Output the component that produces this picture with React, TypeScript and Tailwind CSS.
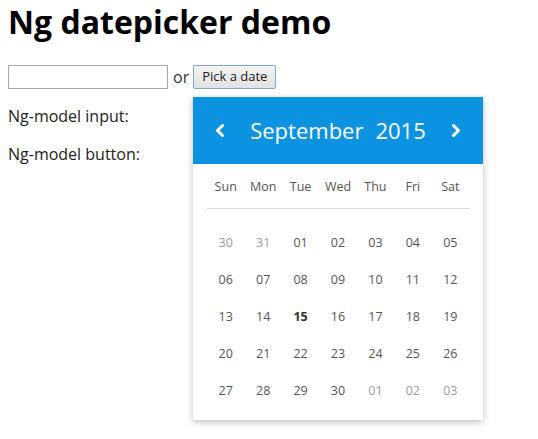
const font = { fontFamily: '"Open Sans", "Liberation Sans", sans-serif' };

const weeks: { d: string; muted?: boolean; bold?: boolean }[][] = [
  [{ d: "30", muted: true }, { d: "31", muted: true }, { d: "01" }, { d: "02" }, { d: "03" }, { d: "04" }, { d: "05" }],
  [{ d: "06" }, { d: "07" }, { d: "08" }, { d: "09" }, { d: "10" }, { d: "11" }, { d: "12" }],
  [{ d: "13" }, { d: "14" }, { d: "15", bold: true }, { d: "16" }, { d: "17" }, { d: "18" }, { d: "19" }],
  [{ d: "20" }, { d: "21" }, { d: "22" }, { d: "23" }, { d: "24" }, { d: "25" }, { d: "26" }],
  [{ d: "27" }, { d: "28" }, { d: "29" }, { d: "30" }, { d: "01", muted: true }, { d: "02", muted: true }, { d: "03", muted: true }],
];

const dayNames = ["Sun", "Mon", "Tue", "Wed", "Thu", "Fri", "Sat"];

function Chevron({ dir }: { dir: "left" | "right" }) {
  return (
    <svg width="10" height="13" viewBox="0 0 10 13" className="block">
      <polyline
        points={dir === "left" ? "7.5,1.5 2.5,6.5 7.5,11.5" : "2.5,1.5 7.5,6.5 2.5,11.5"}
        fill="none"
        stroke="white"
        strokeWidth="3"
        strokeLinecap="round"
        strokeLinejoin="round"
      />
    </svg>
  );
}

function Datepicker() {
  return (
    <div className="absolute left-[193px] top-[97px] w-[290px] bg-white shadow-[0_2px_7px_rgba(0,0,0,0.25)]">
      <div className="h-[67px] bg-[#0b93e1] flex items-center px-[22px] text-white">
        <Chevron dir="left" />
        <div className="flex-1 flex justify-center gap-[12px] text-[22px] leading-none pb-[2px]">
          <span>September</span>
          <span>2015</span>
        </div>
        <Chevron dir="right" />
      </div>
      <div className="px-[14px] pb-[10px]">
        <div className="grid grid-cols-7 h-[45px] pt-[3px] items-center border-b border-[#d9d9d9] text-[12.5px] text-[#555]">
          {dayNames.map((n) => (
            <div key={n} className="text-center">{n}</div>
          ))}
        </div>
        <div className="pt-[16px]">
          {weeks.map((w, i) => (
            <div key={i} className="grid grid-cols-7 h-[37px] items-center text-[12.5px]">
              {w.map((c, j) => (
                <div
                  key={j}
                  className={
                    "text-center " +
                    (c.muted ? "text-[#9a9a9a]" : c.bold ? "text-[#333] font-bold" : "text-[#555]")
                  }
                >
                  {c.d}
                </div>
              ))}
            </div>
          ))}
        </div>
      </div>
    </div>
  );
}

export default function App() {
  return (
    <div className="relative min-h-[439px] bg-white px-2 text-black" style={font}>
      <h1 className="pt-[2px] text-[32px] leading-[40px] font-bold">Ng datepicker demo</h1>
      <div className="mt-[23px] flex items-center h-[24px]">
        <input className="w-[160px] h-[24px] border border-[#a9a9a9] bg-white px-1 outline-none" />
        <span className="ml-[5px] mr-[4px] text-[16px] text-[#333]">or</span>
        <button className="h-[24px] px-[8px] text-[13px] text-[#222] border border-[#7ea7d6] rounded-[2px] bg-gradient-to-b from-[#f4f4f4] to-[#e2e2e2]">
          Pick a date
        </button>
      </div>
      <p className="mt-[16px] text-[16px] leading-[22px] text-[#222]">Ng-model input:</p>
      <p className="mt-[16px] text-[16px] leading-[22px] text-[#222]">Ng-model button:</p>
      <Datepicker />
    </div>
  );
}
